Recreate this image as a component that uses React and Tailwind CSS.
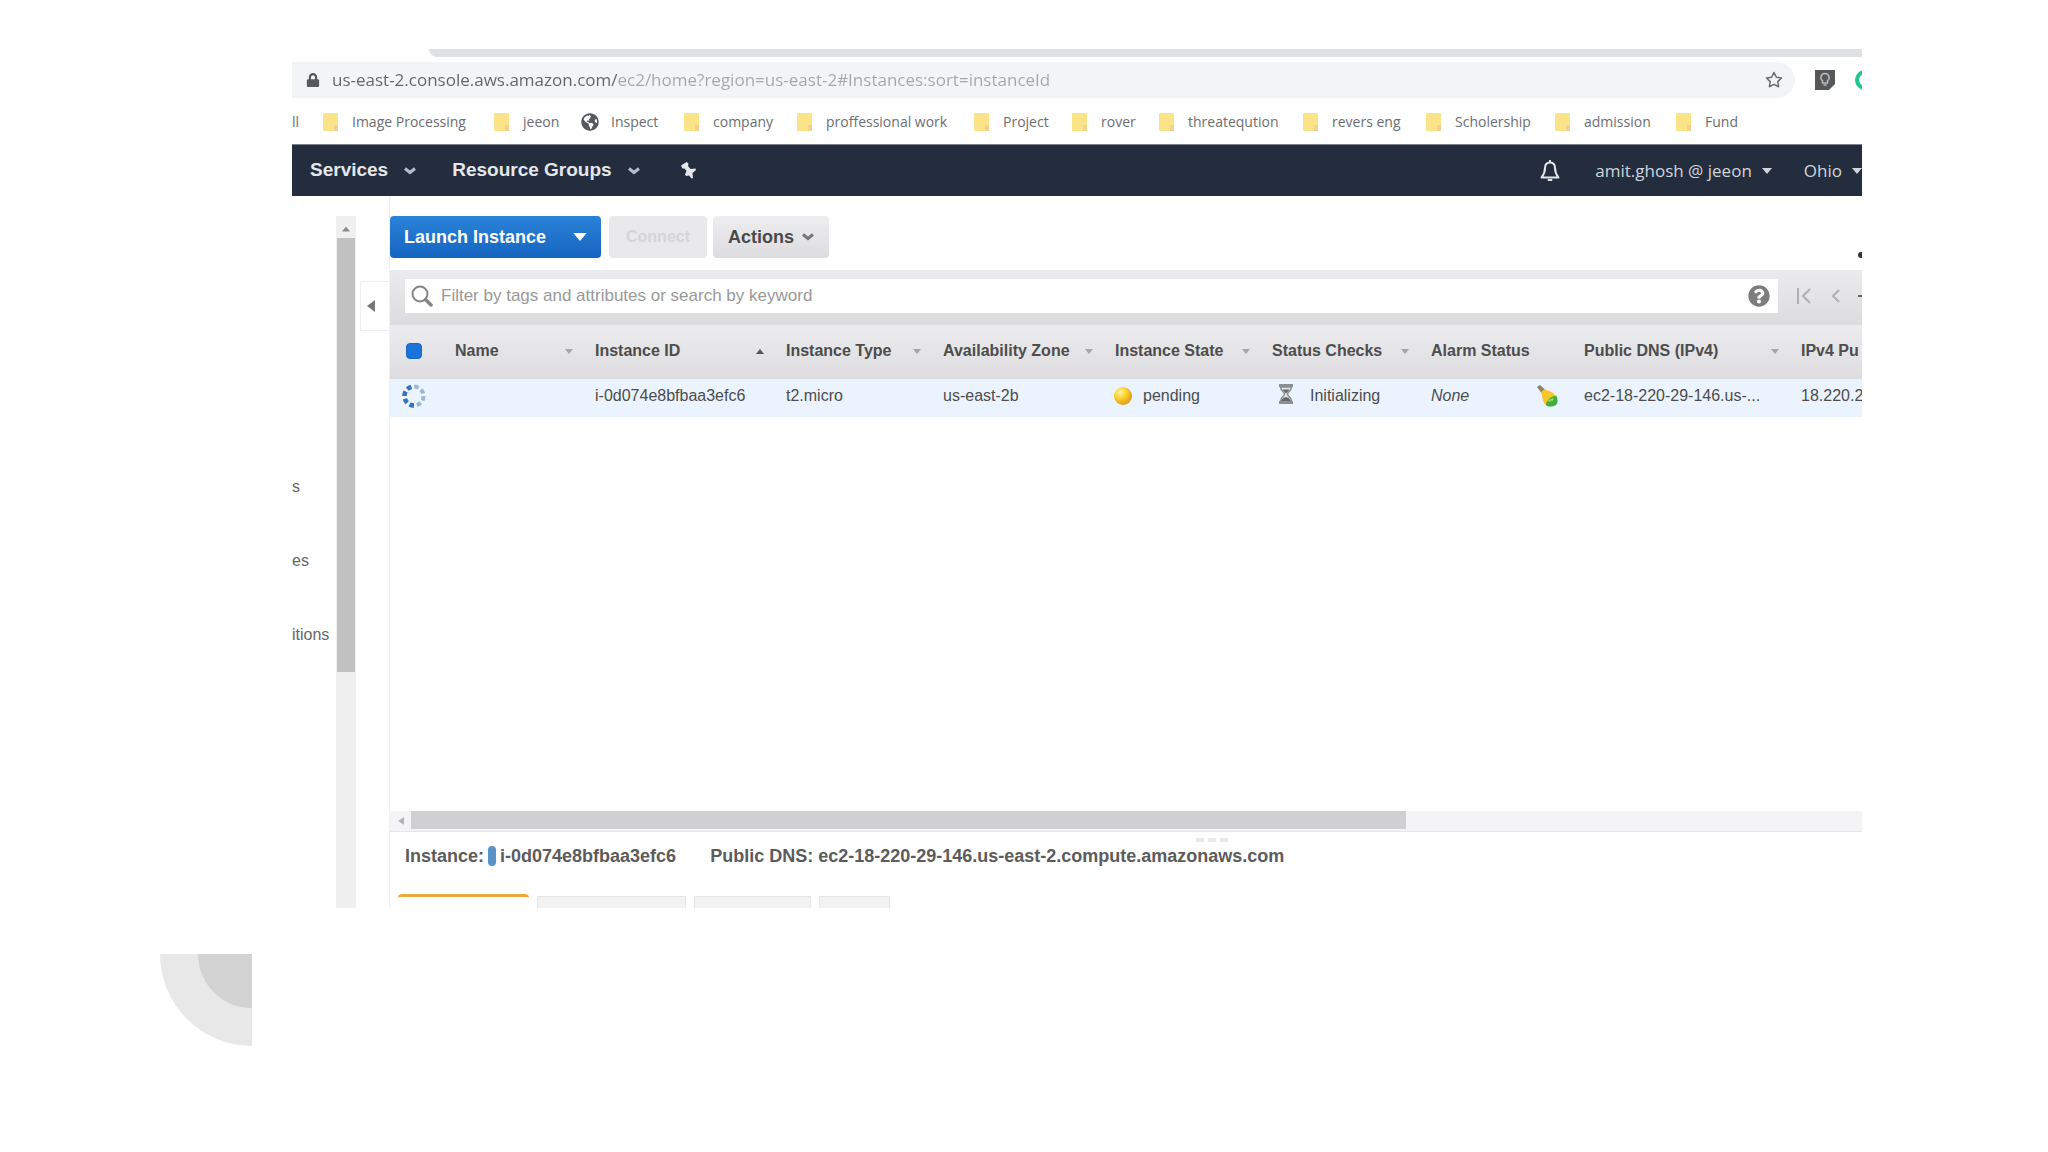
import React, { useState } from "react";
import { FaLock, FaGlobeAmericas, FaQuestionCircle } from "react-icons/fa";
import { FiStar } from "react-icons/fi";

const bookmarks = [
  { name: "Image Processing", width: "w-[171px]" },
  { name: "jeeon", width: "w-[88px]" },
  { name: "Inspect", width: "w-[102px]", globe: true },
  { name: "company", width: "w-[113px]" },
  { name: "proffessional work", width: "w-[177px]" },
  { name: "Project", width: "w-[98px]" },
  { name: "rover", width: "w-[87px]" },
  { name: "threateqution", width: "w-[144px]" },
  { name: "revers eng", width: "w-[123px]" },
  { name: "Scholership", width: "w-[129px]" },
  { name: "admission", width: "w-[121px]" },
  { name: "Fund", width: "w-[80px]" },
];

const columns = [
  { label: "Name", width: "w-[140px]", sort: "down" },
  { label: "Instance ID", width: "w-[191px]", sort: "up" },
  { label: "Instance Type", width: "w-[157px]", sort: "down" },
  { label: "Availability Zone", width: "w-[172px]", sort: "down" },
  { label: "Instance State", width: "w-[157px]", sort: "down" },
  { label: "Status Checks", width: "w-[159px]", sort: "down" },
  { label: "Alarm Status", width: "w-[153px]" },
  { label: "Public DNS (IPv4)", width: "w-[217px]", sort: "down" },
  { label: "IPv4 Pu", width: "w-[200px]" },
];

const instance = {
  id: "i-0d074e8bfbaa3efc6",
  type: "t2.micro",
  zone: "us-east-2b",
  state: "pending",
  dns: "ec2-18-220-29-146.us-east-2.compute.amazonaws.com",
  shortDns: "ec2-18-220-29-146.us-...",
  ip: "18.220.2",
};

const FolderIcon = () => (
  <svg viewBox="0 0 18 20" className="h-5 w-[18px] shrink-0">
    <rect x="1" y="1" width="15" height="18" rx="1" fill="#fbe488" />
    <path d="M12 13h4v6h-4z" fill="#f3cf92" />
  </svg>
);

const Caret = ({ className, up }) => (
  <svg viewBox="0 0 10 6" className={className}>
    <path d={up ? "M0 6L5 0l5 6z" : "M0 0h10L5 6z"} fill="currentColor" />
  </svg>
);

const Chevron = ({ className }) => (
  <svg viewBox="0 0 12 8" className={`h-2 w-3 ${className}`} fill="none" stroke="currentColor" strokeWidth="3">
    <path d="M1 1.500l5 4 5-4" />
  </svg>
);

const PinIcon = () => (
  <svg viewBox="0 0 16 17" className="h-[17px] w-4" fill="currentColor">
    <path d="M1 3.500L6.500 0l2 1.500-.5 2.500 2.500 3 5-.5.500 1.500-3.500 3 .5 5-1.500.5-2.500-3-3 .5-1-1.500 1.500-3.500-2-2.500-2 0z" />
  </svg>
);

const BellIcon = () => (
  <svg viewBox="0 0 20 22" className="h-[22px] w-5" fill="none" stroke="currentColor" strokeWidth="2">
    <path d="M10 2.500c-3.400 0-5 2.500-5 5.500 0 5-1.500 7-3.500 9.500h17C16.500 15 15 13 15 8c0-3-1.600-5.500-5-5.500z" strokeLinejoin="round" />
    <path d="M8.500 20h3M10 0v2" strokeLinecap="round" />
  </svg>
);

const SearchIcon = () => (
  <svg viewBox="0 0 22 22" className="h-[22px] w-[22px] shrink-0" fill="none" stroke="#858585">
    <circle cx="9" cy="9" r="7.500" strokeWidth="2" />
    <path d="M14.500 14.500L20 20" strokeWidth="3.500" strokeLinecap="round" />
  </svg>
);

const ExtensionIcon = () => (
  <svg viewBox="0 0 20 20" className="h-5 w-5">
    <path d="M0 0h20v14l-6 6H0z" fill="#555759" />
    <path d="M10 3.500a4 4 0 0 0-2.500 7.200V13h5v-2.300A4 4 0 0 0 10 3.500zM8.500 15h3" fill="none" stroke="#b9bbbd" strokeWidth="1.500" />
  </svg>
);

const Spinner = () => (
  <svg viewBox="0 0 24 24" className="h-6 w-6" fill="none">
    <circle cx="12" cy="12" r="9.500" stroke="#9db4d3" strokeWidth="4" strokeDasharray="4.500 2.960" />
    <path d="M12 21.500a9.500 9.500 0 0 1-9.500-9.500 9.500 9.500 0 0 1 7-9.200" stroke="#2f74bd" strokeWidth="4.500" strokeDasharray="4.500 2.960" />
  </svg>
);

const PendingIcon = () => (
  <svg viewBox="0 0 20 20" className="h-5 w-5 shrink-0">
    <defs>
      <radialGradient id="pending" cx="0.350" cy="0.300" r="0.700">
        <stop offset="0" stopColor="#fff3a0" />
        <stop offset="0.500" stopColor="#fbd02c" />
        <stop offset="1" stopColor="#e39b1e" />
      </radialGradient>
    </defs>
    <circle cx="10" cy="10" r="9" fill="url(#pending)" />
  </svg>
);

const HourglassIcon = () => (
  <svg viewBox="0 0 16 20" className="mb-1 h-5 w-4 shrink-0">
    <path d="M1 0h14v3H1zM1 17h14v3H1z" fill="#8b8f94" />
    <path d="M2.500 3c0 4 4 4.500 4 7s-4 3-4 7h11c0-4-4-4.500-4-7s4-3 4-7z" fill="#e3e7eb" stroke="#8b8f94" strokeWidth="1.500" />
    <path d="M4.500 5.500h7L8 9.500zM3.500 17c0-2.500 3-3.500 4.500-4 1.500.5 4.500 1.500 4.500 4z" fill="#63676c" />
  </svg>
);

const AlarmIcon = () => (
  <svg viewBox="0 0 22 22" className="h-[22px] w-[22px] shrink-0">
    <path d="M1 2l3-2 5 4.500L5.500 8z" fill="#8d8560" />
    <path d="M5 7.500L8.500 4c4 2 9 3 11.500 7l-9 10C6 18 7 12 5 7.500z" fill="#f7c62b" />
    <path d="M10 20c0-4 5-9.500 10.500-9 1.500 3.500 1.500 7-.5 9-3.500 2-7.500 2-10 0z" fill="#3fae3a" />
    <path d="M12.500 16l5-2" stroke="#8fdc5a" strokeWidth="2" fill="none" />
  </svg>
);

const BrowserBar = () => (
  <div className="bg-white">
    <div className="ml-[137px] h-2 rounded-bl-lg bg-[#dfe1e3]"></div>
    <div className="flex h-[46px] items-center">
      <div className="flex h-9 min-w-0 flex-1 items-center rounded-r-full bg-[#f3f4f5] pr-3 pl-3.5">
        <FaLock className="h-3.5 w-3.5 shrink-0 text-[#55585c]" />
        <input
          type="text"
          aria-label="Address"
          defaultValue="us-east-2.console.aws.amazon.com/ec2/home?region=us-east-2#Instances:sort=instanceId"
          className="ml-3 min-w-0 flex-1 bg-[linear-gradient(90deg,#606468_285px,#a3a7ab_285px)] bg-clip-text font-['Open_Sans',sans-serif] text-[17px] text-transparent outline-none"
        />
        <button type="button" aria-label="Bookmark this page">
          <FiStar className="h-[18px] w-[18px] text-[#6a6d70]" />
        </button>
      </div>
      <button type="button" aria-label="Extension" className="ml-5">
        <ExtensionIcon />
      </button>
      <div className="ml-5 h-5 w-[7px] overflow-hidden">
        <div className="h-5 w-5 rounded-full border-4 border-[#1fc78c]"></div>
      </div>
    </div>
    <nav className="flex h-[41px] items-center overflow-hidden pb-1 font-['Open_Sans',sans-serif] text-sm text-[#6b6e72]">
      <a href="#all" className="w-[30px] shrink-0">ll</a>
      {bookmarks.map((item) => (
        <a key={item.name} href="#bookmark" className={`flex shrink-0 items-center gap-3 whitespace-nowrap ${item.width}`}>
          {item.globe ? <FaGlobeAmericas className="h-[18px] w-[18px] shrink-0 text-[#55585c]" /> : <FolderIcon />}
          {item.name}
        </a>
      ))}
    </nav>
  </div>
);

const ConsoleNav = () => (
  <header className="flex h-[52px] items-center overflow-hidden border-t border-[#7d828b] bg-[#232d3e] pl-[18px] text-[#e4e7eb]">
    <button type="button" className="flex items-center gap-4 text-[19px] font-bold">
      Services
      <Chevron className="text-[#b9bfc8]" />
    </button>
    <button type="button" className="ml-9 flex items-center gap-4 text-[19px] font-bold">
      Resource Groups
      <Chevron className="text-[#b9bfc8]" />
    </button>
    <button type="button" aria-label="Pin" className="ml-10">
      <PinIcon />
    </button>
    <button type="button" aria-label="Notifications" className="ml-auto">
      <BellIcon />
    </button>
    <button type="button" className="ml-[35px] flex items-center gap-2.5 font-['Open_Sans',sans-serif] text-[17px] whitespace-nowrap text-[#d0d5dc]">
      amit.ghosh @ jeeon
      <Caret className="h-1.5 w-2.5" />
    </button>
    <button type="button" className="ml-8 flex items-center gap-2.5 font-['Open_Sans',sans-serif] text-[17px] text-[#d0d5dc]">
      Ohio
      <Caret className="h-1.5 w-2.5" />
    </button>
  </header>
);

const SideMenu = () => (
  <aside className="flex w-[98px] shrink-0 overflow-hidden border-r border-[#f2f2f2] text-base text-[#666]">
    <ul className="w-11 shrink-0 space-y-[50px] overflow-hidden pt-[279px] leading-6">
      <li>s</li>
      <li>es</li>
      <li>itions</li>
    </ul>
    <div className="mt-5 w-5 shrink-0 bg-[#f0f0f0] px-px">
      <Caret up className="mx-auto mt-2.5 mb-1.5 h-1.5 w-2 text-[#8b8b8b]" />
      <div className="h-[434px] bg-[#c1c1c1]"></div>
    </div>
    <button type="button" aria-label="Collapse menu" className="mt-[85px] ml-1 flex h-[50px] flex-1 items-center border border-r-0 border-[#f0f0f0] pl-1.5">
      <svg viewBox="0 0 8 12" className="h-3 w-2">
        <path d="M8 0v12L0 6z" fill="#777" />
      </svg>
    </button>
  </aside>
);

const InstanceTable = () => {
  const [checked, setChecked] = useState(true);

  return (
    <table className="w-[1603px] table-fixed text-left text-base whitespace-nowrap text-[#4d4d4d]">
      <thead>
        <tr className="h-[54px] bg-linear-to-b from-[#ecebed] to-[#dddcde]">
          <th className="w-[57px] pb-0.5 pl-4">
            <input
              type="checkbox"
              aria-label="Select all instances"
              checked={checked}
              onChange={(e) => setChecked(e.target.checked)}
              className="block h-4 w-4 appearance-none rounded-sm border border-[#1a66c4] checked:bg-[#1a73d9]"
            />
          </th>
          {columns.map((col) => (
            <th key={col.label} className={`pr-3.5 pb-0.5 pl-2 font-bold ${col.width}`}>
              <div className="flex items-center justify-between">
                {col.label}
                {col.sort && (
                  <Caret
                    up={col.sort === "up"}
                    className={col.sort === "up" ? "h-[5px] w-2 text-[#555]" : "h-[5px] w-2 text-[#a5a5a5]"}
                  />
                )}
              </div>
            </th>
          ))}
        </tr>
      </thead>
      <tbody>
        <tr className="h-[38px] bg-[#ebf3fe] *:pb-1">
          <td className="pl-3"><Spinner /></td>
          <td></td>
          <td className="pl-2">{instance.id}</td>
          <td className="pl-2">{instance.type}</td>
          <td className="pl-2">{instance.zone}</td>
          <td className="pl-1.5">
            <div className="flex items-center gap-2.5">
              <PendingIcon />
              {instance.state}
            </div>
          </td>
          <td className="pl-3.5">
            <div className="flex items-center gap-4">
              <HourglassIcon />
              Initializing
            </div>
          </td>
          <td className="pr-[18px] pl-2">
            <div className="flex items-center justify-between italic">
              None
              <AlarmIcon />
            </div>
          </td>
          <td className="pl-2">{instance.shortDns}</td>
          <td className="pl-2">{instance.ip}</td>
        </tr>
      </tbody>
    </table>
  );
};

const App = () => {
  return (
    <div className="min-h-screen overflow-hidden bg-white font-['Liberation_Sans',Arial,sans-serif]">
      <div className="mt-[49px] mr-[186px] ml-[292px] overflow-hidden">
        <BrowserBar />
        <ConsoleNav />

        <div className="flex">
          <SideMenu />

          <main className="min-w-0 flex-1 overflow-hidden">
            <div className="flex items-center pt-5 pb-3">
              <button type="button" className="flex h-[42px] w-[211px] items-center justify-between rounded bg-linear-to-b from-[#2b82d9] to-[#1565c0] pr-3.5 pl-3.5 text-lg font-bold text-white">
                Launch Instance
                <Caret className="h-2 w-3.5" />
              </button>
              <button type="button" disabled className="ml-2 h-[42px] w-[98px] rounded bg-[#e9e8ea] text-base font-bold text-[#d5d4d8]">
                Connect
              </button>
              <button type="button" className="ml-1.5 flex h-[42px] w-[116px] items-center justify-center gap-2 rounded bg-linear-to-b from-[#eeedef] to-[#dddcde] text-lg font-bold text-[#4a4a4a]">
                Actions
                <Chevron className="text-[#777]" />
              </button>
              <div className="mt-9 ml-auto h-1.5 w-1 rounded-l-full bg-[#333]"></div>
            </div>

            <div className="flex h-[55px] items-center bg-linear-to-b from-[#ebeaec] to-[#dcdbdd] pb-1 pl-[15px]">
              <label className="flex h-[34px] min-w-0 flex-1 items-center gap-2 bg-white pr-2 pl-1.5">
                <SearchIcon />
                <input
                  type="text"
                  aria-label="Filter instances"
                  placeholder="Filter by tags and attributes or search by keyword"
                  className="min-w-0 flex-1 text-[17px] outline-none placeholder:text-[#999]"
                />
                <FaQuestionCircle className="h-[22px] w-[22px] text-[#7d7d7d]" />
              </label>
              <button type="button" aria-label="First page" className="ml-[18px]">
                <svg viewBox="0 0 16 16" className="h-4 w-4" fill="none" stroke="#b0b0b0" strokeWidth="2">
                  <path d="M2 0v16M14 1L7 8l7 7" />
                </svg>
              </button>
              <button type="button" aria-label="Previous page" className="ml-[18px]">
                <svg viewBox="0 0 10 16" className="h-4 w-2.5" fill="none" stroke="#b0b0b0" strokeWidth="2">
                  <path d="M9 2L3 8l6 6" />
                </svg>
              </button>
              <div className="ml-[18px] h-0.5 w-1 bg-[#666]"></div>
            </div>

            <div className="min-h-[486px] overflow-hidden">
              <InstanceTable />
            </div>

            <div className="flex h-[21px] items-start border-b border-[#e6e6e8] bg-[#f4f4f6] pl-2">
              <svg viewBox="0 0 6 8" className="mt-1.5 h-2 w-1.5">
                <path d="M6 0v8L0 4z" fill="#b5b5b5" />
              </svg>
              <div className="ml-[7px] h-[18px] w-[995px] bg-[#d0d0d2]"></div>
            </div>

            <div className="flex h-[15px] items-center justify-center gap-1 pl-[172px]">
              <span className="h-1 w-2 bg-[#ebebeb]"></span>
              <span className="h-1 w-2 bg-[#ebebeb]"></span>
              <span className="h-1 w-2 bg-[#ebebeb]"></span>
            </div>

            <div className="flex h-[18px] items-center pl-[15px] text-lg font-bold whitespace-nowrap text-[#5c5c5c]">
              Instance:
              <span className="mx-1 h-5 w-2 rounded-sm bg-[#5a93c8]"></span>
              {instance.id}
              <span className="ml-[34px]">Public DNS: {instance.dns}</span>
            </div>

            <div role="tablist" className="flex h-[43px] items-end gap-2 pl-2">
              <button type="button" role="tab" aria-label="Description" aria-selected="true" className="h-3.5 w-[131px] rounded-t-sm border-t-3 border-[#eda83d] bg-white"></button>
              <button type="button" role="tab" aria-label="Status Checks" className="h-3 w-[149px] border border-b-0 border-[#e6e6e7] bg-[#f2f2f2]"></button>
              <button type="button" role="tab" aria-label="Monitoring" className="h-3 w-[117px] border border-b-0 border-[#e6e6e7] bg-[#f2f2f2]"></button>
              <button type="button" role="tab" aria-label="Tags" className="h-3 w-[71px] border border-b-0 border-[#e6e6e7] bg-[#f2f2f2]"></button>
            </div>
          </main>
        </div>
      </div>

      <svg viewBox="0 0 92 92" className="mt-[46px] ml-40 h-[92px] w-[92px]">
        <path d="M0 0h92v92A92 92 0 0 1 0 0z" fill="#e8e8e8" />
        <path d="M38 0h54v54A54 54 0 0 1 38 0z" fill="#d2d2d2" />
      </svg>
    </div>
  );
};

export default App;
